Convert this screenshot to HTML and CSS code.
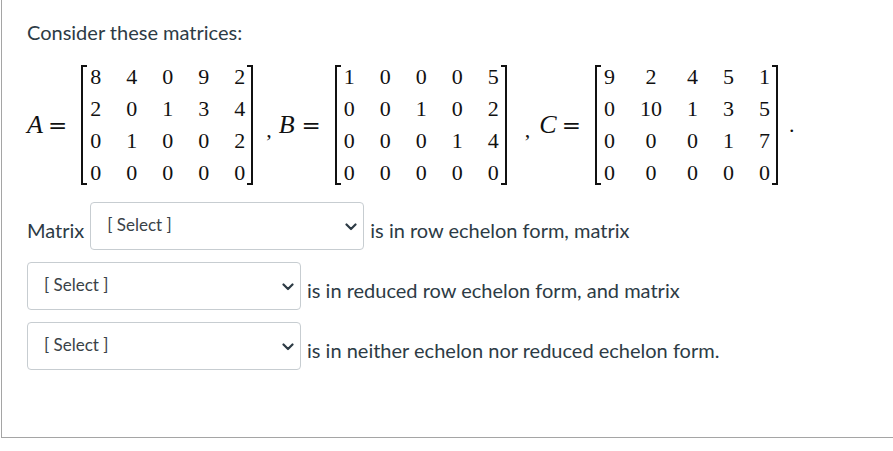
FILE: index.html
```html
<!DOCTYPE html>
<html lang="en">
<head>
<meta charset="utf-8">
<title>Echelon forms</title>
<link rel="stylesheet" href="styles.css">
</head>
<body>
<div class="panel">
  <p class="intro">Consider these matrices:</p>
  <div class="math">
    <span class="var va">A</span><span class="eq ea">=</span>
    <span class="matrix">
      <span class="br l"></span>
      <table>
        <tr><td>8</td><td>4</td><td>0</td><td>9</td><td>2</td></tr>
        <tr><td>2</td><td>0</td><td>1</td><td>3</td><td>4</td></tr>
        <tr><td>0</td><td>1</td><td>0</td><td>0</td><td>2</td></tr>
        <tr><td>0</td><td>0</td><td>0</td><td>0</td><td>0</td></tr>
      </table>
      <span class="br r"></span>
    </span>
    <span class="comma c1">,</span><span class="var vb">B</span><span class="eq">=</span>
    <span class="matrix">
      <span class="br l"></span>
      <table>
        <tr><td>1</td><td>0</td><td>0</td><td>0</td><td>5</td></tr>
        <tr><td>0</td><td>0</td><td>1</td><td>0</td><td>2</td></tr>
        <tr><td>0</td><td>0</td><td>0</td><td>1</td><td>4</td></tr>
        <tr><td>0</td><td>0</td><td>0</td><td>0</td><td>0</td></tr>
      </table>
      <span class="br r"></span>
    </span>
    <span class="comma c2">,</span><span class="var vc">C</span><span class="eq ec">=</span>
    <span class="matrix">
      <span class="br l"></span>
      <table>
        <tr><td>9</td><td>2</td><td>4</td><td>5</td><td>1</td></tr>
        <tr><td>0</td><td>10</td><td>1</td><td>3</td><td>5</td></tr>
        <tr><td>0</td><td>0</td><td>0</td><td>1</td><td>7</td></tr>
        <tr><td>0</td><td>0</td><td>0</td><td>0</td><td>0</td></tr>
      </table>
      <span class="br r"></span>
    </span>
    <span class="period">.</span>
  </div>

  <div class="line">
    <span class="word">Matrix</span>
    <div class="select" role="combobox" aria-expanded="false">
      <span class="select-label">[ Select ]</span>
      <svg class="chev" width="12" height="8" viewBox="0 0 12 8"><path d="M1.5 1.5 L6 6 L10.5 1.5" fill="none" stroke="#2d3b45" stroke-width="2.2" stroke-linecap="round" stroke-linejoin="round"/></svg>
    </div>
    <span class="word">is in row echelon form, matrix</span>
  </div>
  <div class="line">
    <div class="select" role="combobox" aria-expanded="false">
      <span class="select-label">[ Select ]</span>
      <svg class="chev" width="12" height="8" viewBox="0 0 12 8"><path d="M1.5 1.5 L6 6 L10.5 1.5" fill="none" stroke="#2d3b45" stroke-width="2.2" stroke-linecap="round" stroke-linejoin="round"/></svg>
    </div>
    <span class="word">is in reduced row echelon form, and matrix</span>
  </div>
  <div class="line">
    <div class="select" role="combobox" aria-expanded="false">
      <span class="select-label">[ Select ]</span>
      <svg class="chev" width="12" height="8" viewBox="0 0 12 8"><path d="M1.5 1.5 L6 6 L10.5 1.5" fill="none" stroke="#2d3b45" stroke-width="2.2" stroke-linecap="round" stroke-linejoin="round"/></svg>
    </div>
    <span class="word">is in neither echelon nor reduced echelon form.</span>
  </div>
</div>
</body>
</html>
```

FILE: styles.css
```css
html, body {
  margin: 0;
  padding: 0;
  background: #ffffff;
  overflow: hidden;
}

body {
  font-family: Lato, "Open Sans", sans-serif;
  color: #2d3b45;
}

.panel {
  margin-left: 1px;
  width: 892px;
  height: 438px;
  border-left: 1px solid #a5a5a5;
  border-bottom: 1px solid #a5a5a5;
  padding: 17px 0 0 25px;
  box-sizing: border-box;
}

.intro {
  margin: 0;
  font-size: 20px;
  line-height: 30px;
}

.math {
  display: flex;
  align-items: center;
  margin-top: 14px;
  font-family: "Liberation Serif", "DejaVu Serif", serif;
  font-size: 22px;
  color: #111;
}

.var {
  font-style: italic;
  font-size: 26px;
}

.eq {
  font-family: "DejaVu Serif", serif;
  font-size: 23px;
  margin: 0 14px 0 7px;
}

.eq.ea {
  margin-left: 5px;
}

.eq.ec {
  margin-left: 5px;
}

.matrix {
  display: flex;
  align-items: center;
}

.matrix table {
  border-collapse: collapse;
  border-spacing: 0;
}

.matrix td {
  height: 32px;
  padding: 0 12.5px;
  text-align: center;
  line-height: 32px;
}

.matrix td:first-child {
  padding-left: 0;
}

.matrix td:last-child {
  padding-right: 0;
}

.br {
  width: 6px;
  height: 120px;
  border-top: 2px solid #111;
  border-bottom: 2px solid #111;
  box-sizing: border-box;
}

.br.l {
  border-left: 2px solid #111;
  margin-right: 3px;
}

.br.r {
  border-right: 2px solid #111;
  margin-left: 2px;
}

.comma {
  margin-top: 10px;
}

.comma.c1 {
  margin-left: 13px;
  margin-right: 7px;
}

.comma.c2 {
  margin-left: 18px;
  margin-right: 9px;
}

.period {
  margin-left: 11px;
}

.line {
  display: flex;
  align-items: center;
  gap: 6px;
  font-size: 20px;
  margin-top: 12px;
}

.math + .line {
  margin-top: 13px;
}

.word {
  margin-top: 8px;
  line-height: 30px;
}

.select {
  position: relative;
  width: 274px;
  height: 48px;
  border: 1px solid #c7cdd1;
  border-radius: 4px;
  box-sizing: border-box;
  background: #fff;
  font-size: 17px;
  color: #3a4248;
  padding: 12px 0 0 16px;
  line-height: 20px;
}

.chev {
  position: absolute;
  right: 6px;
  top: 20px;
}
```
